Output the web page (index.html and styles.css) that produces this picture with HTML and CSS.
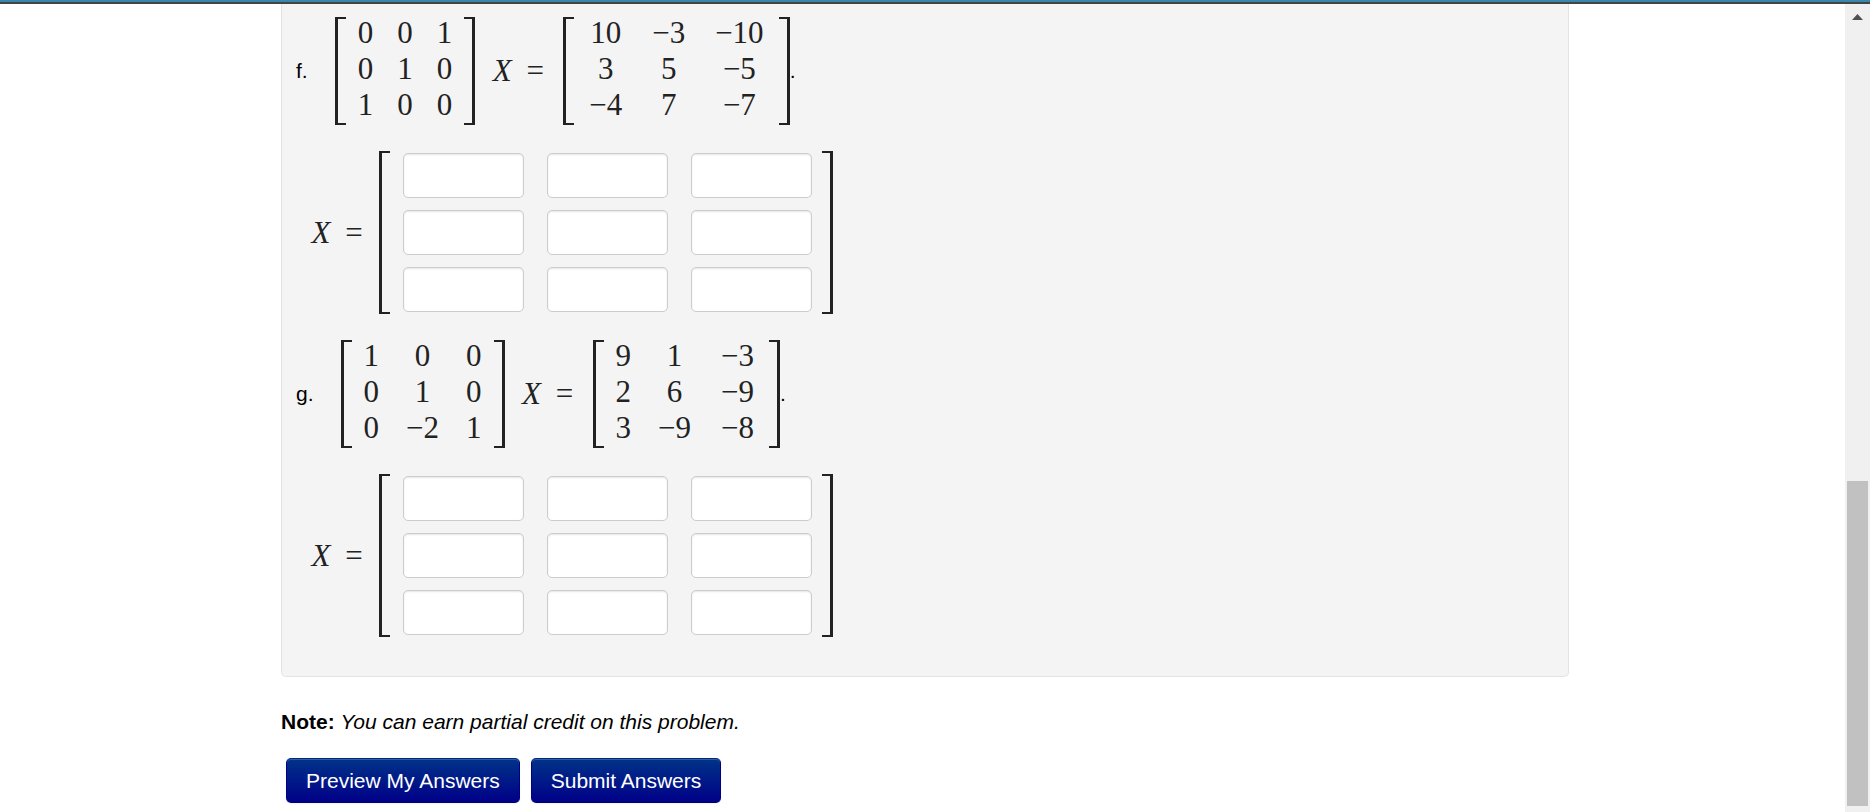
FILE: index.html
```
<!DOCTYPE html>
<html lang="en">
<head>
  <meta charset="UTF-8">
  <title>Matrix Equations</title>
  <link rel="stylesheet" href="styles.css">
</head>
<body>
  <div class="topbar"></div>
  <div class="page">
    <main class="content">
      <section class="problem">

        <div class="equation">
          <span class="part">f.</span>
          <div class="matrix">
            <table>
              <tr><td>0</td><td>0</td><td>1</td></tr>
              <tr><td>0</td><td>1</td><td>0</td></tr>
              <tr><td>1</td><td>0</td><td>0</td></tr>
            </table>
          </div>
          <span class="var">X</span><span class="eq">=</span>
          <div class="matrix">
            <table>
              <tr><td>10</td><td class="neg">−3</td><td class="neg">−10</td></tr>
              <tr><td>3</td><td>5</td><td class="neg">−5</td></tr>
              <tr><td class="neg">−4</td><td>7</td><td class="neg">−7</td></tr>
            </table>
          </div>
          <span class="dot">.</span>
        </div>

        <div class="answer">
          <span class="var">X</span><span class="eq">=</span>
          <div class="matrix">
            <div class="inputs">
              <input type="text" aria-label="f row 1 column 1">
              <input type="text" aria-label="f row 1 column 2">
              <input type="text" aria-label="f row 1 column 3">
              <input type="text" aria-label="f row 2 column 1">
              <input type="text" aria-label="f row 2 column 2">
              <input type="text" aria-label="f row 2 column 3">
              <input type="text" aria-label="f row 3 column 1">
              <input type="text" aria-label="f row 3 column 2">
              <input type="text" aria-label="f row 3 column 3">
            </div>
          </div>
        </div>

        <div class="equation">
          <span class="part">g.</span>
          <div class="matrix">
            <table>
              <tr><td>1</td><td>0</td><td>0</td></tr>
              <tr><td>0</td><td>1</td><td>0</td></tr>
              <tr><td>0</td><td class="neg">−2</td><td>1</td></tr>
            </table>
          </div>
          <span class="var">X</span><span class="eq">=</span>
          <div class="matrix">
            <table>
              <tr><td>9</td><td>1</td><td class="neg">−3</td></tr>
              <tr><td>2</td><td>6</td><td class="neg">−9</td></tr>
              <tr><td>3</td><td class="neg">−9</td><td class="neg">−8</td></tr>
            </table>
          </div>
          <span class="dot">.</span>
        </div>

        <div class="answer">
          <span class="var">X</span><span class="eq">=</span>
          <div class="matrix">
            <div class="inputs">
              <input type="text" aria-label="g row 1 column 1">
              <input type="text" aria-label="g row 1 column 2">
              <input type="text" aria-label="g row 1 column 3">
              <input type="text" aria-label="g row 2 column 1">
              <input type="text" aria-label="g row 2 column 2">
              <input type="text" aria-label="g row 2 column 3">
              <input type="text" aria-label="g row 3 column 1">
              <input type="text" aria-label="g row 3 column 2">
              <input type="text" aria-label="g row 3 column 3">
            </div>
          </div>
        </div>

      </section>

      <p class="note"><b>Note:</b> <i>You can earn partial credit on this problem.</i></p>

      <div class="buttons">
        <button type="button">Preview My Answers</button>
        <button type="button">Submit Answers</button>
      </div>
    </main>

    <div class="scrollbar">
      <svg width="11" height="6" viewBox="0 0 11 6"><path d="M5.5 0L11 6H0z" fill="#505050"/></svg>
      <div class="thumb"></div>
    </div>
  </div>
</body>
</html>
```

FILE: styles.css
```
*,
*::before,
*::after {
  box-sizing: border-box;
}

body {
  margin: 0;
  height: 100vh;
  display: flex;
  flex-direction: column;
  overflow: hidden;
  background: #fff;
  color: #000;
  font-family: "Liberation Sans", Arial, sans-serif;
  font-size: 21px;
  line-height: 30px;
}

.topbar {
  flex: none;
  height: 4px;
  background: #3a87ad;
  border-bottom: 2px solid #444;
}

.page {
  flex: 1;
  min-height: 0;
  display: flex;
}

.content {
  flex: 1;
  padding: 0 276px 0 281px;
}

.problem {
  display: flex;
  flex-direction: column;
  gap: 26px;
  padding: 13px 14px 39px;
  background: #f4f4f4;
  border: 1px solid #e3e3e3;
  border-top: none;
  border-radius: 0 0 5px 5px;
}

.equation,
.answer {
  display: flex;
  align-items: center;
}

.answer {
  padding-left: 12px;
}

.part {
  margin-right: 27px;
}

/* matrices */
.matrix {
  display: flex;
}

.matrix::before,
.matrix::after {
  content: "";
  width: 11px;
  border: 2px solid #222;
}

.matrix::before {
  border-right: none;
  border-left-width: 3px;
}

.matrix::after {
  border-left: none;
  border-right-width: 3px;
}

table {
  border-collapse: collapse;
}

td {
  padding: 0 12px;
  height: 36px;
  text-align: center;
  vertical-align: top;
  line-height: 32px;
}

td.neg {
  padding: 0 15px;
}

td,
.var,
.eq {
  font-family: "Liberation Serif", "Times New Roman", serif;
  font-size: 31px;
  color: #222;
}

.var {
  width: 26px;
  text-align: center;
  font-style: italic;
}

.eq {
  width: 20px;
  margin: 0 18px 0 10px;
  text-align: center;
}

.matrix + .var {
  margin-left: 14px;
}

.answer .eq {
  margin-right: 15px;
}

/* answer blanks */
.inputs {
  display: grid;
  grid-template-columns: repeat(3, 121px);
  gap: 12px 23px;
  padding: 2px 10px 2px 13px;
}

.inputs input {
  width: 100%;
  height: 45px;
  padding: 5px 8px;
  border: 1px solid #ccc;
  border-radius: 5px;
  background: #fff;
  box-shadow: inset 0 1px 2px rgba(0, 0, 0, 0.1);
  font: inherit;
}

.note {
  margin: 30px 0 21px;
}

.buttons {
  display: flex;
  gap: 11px;
  padding-left: 5px;
}

button {
  height: 45px;
  padding: 0 19px;
  border: 1px solid #002a80;
  border-color: #002a80 #000080 #000070;
  border-radius: 5px;
  background: linear-gradient(#003388, #000088);
  box-shadow: inset 0 1px 0 rgba(255, 255, 255, 0.2), 0 1px 2px rgba(0, 0, 0, 0.05);
  color: #fff;
  font-family: inherit;
  font-size: 21px;
  cursor: pointer;
}

.scrollbar {
  width: 25px;
  display: flex;
  flex-direction: column;
  align-items: center;
  padding: 10px 2px 6px;
  background: #f0f0f0;
}

.thumb {
  width: 100%;
  height: 41%;
  margin-top: auto;
  background: #c1c1c1;
}
```
